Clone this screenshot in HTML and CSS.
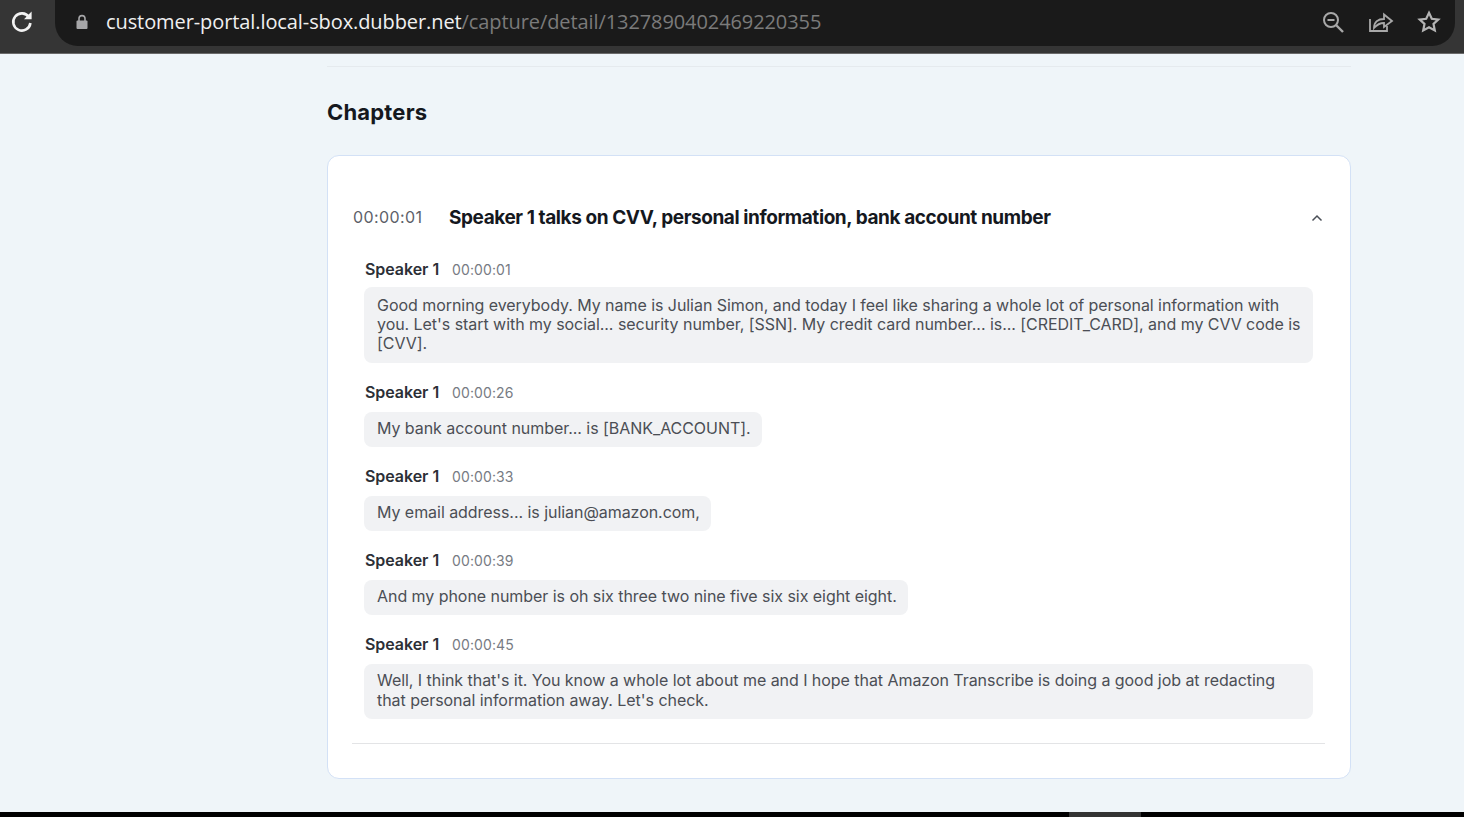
FILE: index.html
```html
<!DOCTYPE html>
<html lang="en">

<head>
    <meta charset="UTF-8">
    <title>Capture detail</title>
    <link rel="stylesheet" href="styles.css">
</head>

<body>
    <header class="browser-bar">
        <svg class="reload" width="26" height="26" viewBox="0 0 26 26" fill="none">
            <path d="M20 9.2A8.6 8.6 0 1 0 21.4 15" stroke="#f2f2f2" stroke-width="2.6" />
            <path d="M22.6 3.6v7.6H15z" fill="#f2f2f2" />
        </svg>
        <div class="address">
            <svg class="lock" width="14" height="16" viewBox="0 0 14 16">
                <path d="M4 7V4.6a3 3 0 0 1 6 0V7" fill="none" stroke="#a6a6a8" stroke-width="1.6" />
                <rect x="1.5" y="6.5" width="11" height="8.5" rx="1" fill="#a6a6a8" />
            </svg>
            <span class="url"><span class="host">customer-portal.local-sbox.dubber.net</span>/capture/detail/1327890402469220355</span>
            <div class="bar-icons">
                <svg width="24" height="24" viewBox="0 0 24 24" fill="none" stroke="#a8a8a8" stroke-width="2">
                    <circle cx="10" cy="10" r="7" />
                    <path d="M6.5 10h7" />
                    <path d="M15 15l7 7" stroke-width="2.4" />
                </svg>
                <svg width="26" height="24" viewBox="0 0 26 24" fill="none" stroke="#a8a8a8" stroke-width="1.8">
                    <path d="M2 9v12h17v-5" />
                    <path d="M6 18c0-6 4-9 10-9V4.5L24 11l-8 6v-4c-4 0-7 1.500-10 5z" />
                </svg>
                <svg width="24" height="24" viewBox="0 0 24 24" fill="none" stroke="#b4b4b4" stroke-width="2.200">
                    <path d="M12 2.800l2.800 6 6.500.8-4.800 4.400 1.300 6.500-5.800-3.200-5.800 3.200 1.300-6.500-4.800-4.400 6.500-.8z" />
                </svg>
            </div>
        </div>
    </header>

    <main class="page">
        <div class="top-rule"></div>
        <h2 class="page-title">Chapters</h2>

        <section class="card">
            <div class="chapter-head">
                <span class="chapter-time">00:00:01</span>
                <h3 class="chapter-title">Speaker 1 talks on CVV, personal information, bank account number</h3>
                <svg class="chevron" width="14" height="14" viewBox="0 0 14 14" fill="none" stroke="#4a4f57" stroke-width="1.500">
                    <path d="M2.500 9.500L7 5l4.500 4.500" />
                </svg>
            </div>

            <div class="turn turn-first">
                <div class="turn-meta"><span class="speaker">Speaker 1</span><span class="stamp">00:00:01</span></div>
                <p class="bubble">Good morning everybody. My name is Julian Simon, and today I feel like sharing a whole lot of personal information with you. Let's start with my social... security number, [SSN]. My credit card number... is... [CREDIT_CARD], and my CVV code is [CVV].</p>
            </div>
            <div class="turn">
                <div class="turn-meta"><span class="speaker">Speaker 1</span><span class="stamp">00:00:26</span></div>
                <p class="bubble">My bank account number... is [BANK_ACCOUNT].</p>
            </div>
            <div class="turn">
                <div class="turn-meta"><span class="speaker">Speaker 1</span><span class="stamp">00:00:33</span></div>
                <p class="bubble">My email address... is julian@amazon.com,</p>
            </div>
            <div class="turn">
                <div class="turn-meta"><span class="speaker">Speaker 1</span><span class="stamp">00:00:39</span></div>
                <p class="bubble">And my phone number is oh six three two nine five six six eight eight.</p>
            </div>
            <div class="turn">
                <div class="turn-meta"><span class="speaker">Speaker 1</span><span class="stamp">00:00:45</span></div>
                <p class="bubble">Well, I think that's it. You know a whole lot about me and I hope that Amazon Transcribe is doing a good job at redacting that personal information away. Let's check.</p>
            </div>

            <div class="card-rule"></div>
        </section>
    </main>

    <footer class="taskbar">
        <div class="taskbar-tab"></div>
    </footer>
</body>

</html>
```

FILE: styles.css
```css
* {
    margin: 0;
    padding: 0;
    box-sizing: border-box;
}

html,
body {
    height: 817px;
    overflow: hidden;
}

body {
    display: flex;
    flex-direction: column;
    background: #eff5f9;
    font-family: Inter, 'Liberation Sans', sans-serif;
    color: #15181e;
}

.browser-bar {
    height: 54px;
    flex: none;
    display: flex;
    align-items: flex-start;
    gap: 20px;
    padding-left: 9px;
    background: #353535;
    border-bottom: 1px solid #6a6a6a;
}

.reload {
    margin-top: 8px;
}

.address {
    flex: 1;
    height: 46px;
    margin-right: 9px;
    display: flex;
    align-items: center;
    padding: 0 14px 3px 20px;
    background: #1a1a1a;
    border-radius: 0 0 23px 23px;
}

.lock {
    margin-right: 17px;
}

.url {
    flex: 1;
    font-family: 'Open Sans', 'Liberation Sans', sans-serif;
    font-size: 20px;
    letter-spacing: -0.09px;
    color: #7b7b7b;
    white-space: nowrap;
}

.host {
    color: #f0f0f0;
}

.bar-icons {
    display: flex;
    align-items: center;
    gap: 23px;
}

.page {
    flex: 1;
    padding: 12px 113px 0 327px;
}

.top-rule {
    height: 1px;
    background: #e5eaee;
}

.page-title {
    margin: 32px 0 29px;
    font-size: 22px;
    line-height: 27px;
    font-weight: 700;
    letter-spacing: 0.18px;
}

.card {
    height: 624px;
    padding: 48px 25px 0 24px;
    background: #fff;
    border: 1px solid #d3e1f6;
    border-radius: 12px;
}

.chapter-head {
    display: flex;
    align-items: center;
    height: 27px;
    margin-bottom: 28px;
}

.chapter-time {
    width: 96px;
    flex: none;
    margin: 0 0 2px 1px;
    font-size: 16px;
    letter-spacing: 0.4px;
    color: #5d6169;
}

.chapter-title {
    flex: 1;
    font-size: 19px;
    font-weight: 700;
    letter-spacing: -0.42px;
    white-space: nowrap;
}

.chevron {
    margin-right: 1px;
}

.turn {
    padding: 0 12px;
    margin-bottom: 19px;
}

.turn-meta {
    display: flex;
    align-items: baseline;
    gap: 13px;
    height: 20px;
    margin: 0 0 10px 1px;
}

.turn-first .turn-meta {
    margin-bottom: 8px;
}

.speaker {
    font-size: 16px;
    font-weight: 600;
    letter-spacing: -0.05px;
    color: #2c2f36;
}

.stamp {
    font-size: 14px;
    letter-spacing: 0.1px;
    color: #777b83;
}

.bubble {
    width: fit-content;
    padding: 6px 11px 9px 13px;
    font-size: 16px;
    line-height: 20px;
    letter-spacing: -0.05px;
    color: #4b4e55;
    background: #f1f2f4;
    border-radius: 8px;
}

.turn-first .bubble {
    padding-top: 8.500px;
    padding-bottom: 10.500px;
    line-height: 19px;
}

.card-rule {
    height: 1px;
    margin-top: 24px;
    background: #e3e4e6;
}

.taskbar {
    height: 5px;
    flex: none;
    padding-left: 1069px;
    background: #000;
}

.taskbar-tab {
    width: 72px;
    height: 5px;
    background: #333;
}
```
